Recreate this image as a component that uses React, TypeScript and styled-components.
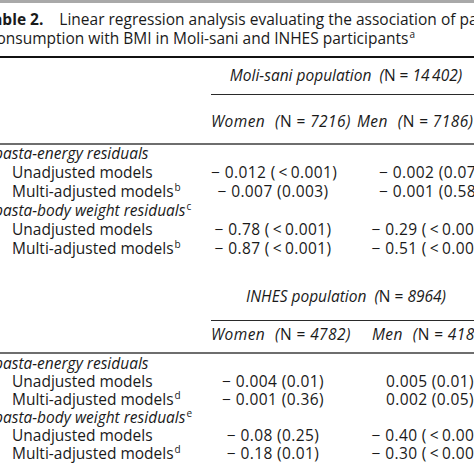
import React from "react";
import styled, { createGlobalStyle } from "styled-components";

const GlobalStyle = createGlobalStyle`
  html, body {
    margin: 0;
    padding: 0;
    background: #ffffff;
    overflow: hidden;
  }
  body {
    width: 474px;
    height: 474px;
    font-family: "Open Sans", "Noto Sans", sans-serif;
    color: #1a1a1a;
  }
`;

const Page = styled.div`
  width: 474px;
  height: 474px;
  overflow: hidden;
  font-size: 15.5px;
`;

const TopBand = styled.div`
  height: 3px;
  background: #a9a9a9;
`;

const Inner = styled.div`
  margin-left: -6px;
  width: 509px;
`;

const Caption = styled.div`
  margin-top: 7px;
  font-size: 15.5px;
  line-height: 19px;
  white-space: nowrap;
`;

const CaptionLine = styled.div<{ $indent: number }>`
  margin-left: ${(p) => p.$indent}px;
`;

const CaptionLabel = styled.b`
  font-weight: 700;
  margin-right: 16px;
`;

const ThickRule = styled.div`
  margin-top: 8px;
  height: 2px;
  background: #111111;
`;

const Row = styled.div<{ $top?: number; $lh?: number }>`
  display: grid;
  grid-template-columns: 217px 124px 168px;
  margin-top: ${(p) => p.$top ?? 0}px;
  line-height: ${(p) => p.$lh ?? 18}px;
  white-space: nowrap;
`;

const PopHeader = styled.div`
  grid-column: 2 / 4;
  text-align: center;
  padding-right: 22px;
  font-style: italic;
`;

const SubRule = styled.div<{ $top: number }>`
  margin: ${(p) => p.$top}px 0 0 217px;
  height: 1px;
  background: #2a2a2a;
`;

const SexHeader = styled.div<{ $indent?: number }>`
  font-style: italic;
  letter-spacing: 0.4px;
  padding-left: ${(p) => p.$indent ?? 0}px;
`;

const FullRule = styled.div<{ $top: number }>`
  margin-top: ${(p) => p.$top}px;
  height: 2px;
  background: #6e6e6e;
`;

const GroupLabel = styled.div`
  font-style: italic;
`;

const ModelLabel = styled.div`
  padding-left: 18px;
`;

const Value = styled.div<{ $men?: boolean }>`
  text-align: center;
  padding-left: ${(p) => (p.$men ? 22 : 0)}px;
  letter-spacing: 0.4px;
`;

const Sup = styled.sup`
  font-style: normal;
  font-size: 10px;
  line-height: 0;
  vertical-align: 6px;
  margin-left: 1px;
  letter-spacing: 0;
`;

const Paren = styled.span<{ $gap?: number }>`
  margin-left: ${(p) => p.$gap ?? 10}px;
`;

const Upright = styled.span`
  font-style: normal;
`;

const NLabel = ({ n, gap }: { n: string; gap?: number }) => (
  <Paren $gap={gap}>
    {"("}
    <Upright>N{" = "}</Upright>
    {n})
  </Paren>
);

type ModelRow = { label: string; sup?: string; women: string; men: string };
type Group = { title: string; sup?: string; rows: ModelRow[] };

type Population = {
  name: string;
  total: string;
  women: string;
  men: string;
  menIndent: number;
  groups: Group[];
  headerTop: number;
  subRuleTop: number;
  sexTop: number;
  ruleTop: number;
  rowTop: number;
  lh: number;
};

const m = "\u2212 ";
const lt = "(\u2009<\u20090.001)";

const populations: Population[] = [
  {
    name: "Moli-sani population",
    total: "14\u2009402",
    women: "7216",
    men: "7186",
    menIndent: 22,
    headerTop: 8,
    subRuleTop: 10,
    sexTop: 17,
    ruleTop: 13,
    rowTop: -1,
    lh: 19,
    groups: [
      {
        title: "pasta-energy residuals",
        rows: [
          { label: "Unadjusted models", women: `${m}0.012 ${lt}`, men: `${m}0.002 (0.07)` },
          { label: "Multi-adjusted models", sup: "b", women: `${m}0.007 (0.003)`, men: `${m}0.001 (0.58)` },
        ],
      },
      {
        title: "pasta-body weight residuals",
        sup: "c",
        rows: [
          { label: "Unadjusted models", women: `${m}0.78 ${lt}`, men: `${m}0.29 ${lt}` },
          { label: "Multi-adjusted models", sup: "b", women: `${m}0.87 ${lt}`, men: `${m}0.51 ${lt}` },
        ],
      },
    ],
  },
  {
    name: "INHES population",
    total: "8964",
    women: "4782",
    men: "4182",
    menIndent: 37,
    headerTop: 29,
    subRuleTop: 15,
    sexTop: 4,
    ruleTop: 9,
    rowTop: 0,
    lh: 18,
    groups: [
      {
        title: "pasta-energy residuals",
        rows: [
          { label: "Unadjusted models", women: `${m}0.004 (0.01)`, men: "0.005 (0.01)" },
          { label: "Multi-adjusted models", sup: "d", women: `${m}0.001 (0.36)`, men: "0.002 (0.05)" },
        ],
      },
      {
        title: "pasta-body weight residuals",
        sup: "e",
        rows: [
          { label: "Unadjusted models", women: `${m}0.08 (0.25)`, men: `${m}0.40 ${lt}` },
          { label: "Multi-adjusted models", sup: "d", women: `${m}0.18 (0.01)`, men: `${m}0.30 ${lt}` },
        ],
      },
    ],
  },
];

const PopulationBlock = ({ p }: { p: Population }) => (
  <>
    <Row $top={p.headerTop}>
      <PopHeader>
        {p.name}
        <NLabel n={p.total} gap={8} />
      </PopHeader>
    </Row>
    <SubRule $top={p.subRuleTop} />
    <Row $top={p.sexTop}>
      <div />
      <SexHeader>
        Women
        <NLabel n={p.women} />
      </SexHeader>
      <SexHeader $indent={p.menIndent}>
        Men
        <NLabel n={p.men} />
      </SexHeader>
    </Row>
    <FullRule $top={p.ruleTop} />
    <div style={{ marginTop: p.rowTop }}>
      {p.groups.map((g) => (
        <React.Fragment key={g.title}>
          <Row $lh={p.lh}>
            <GroupLabel>
              {g.title}
              {g.sup && <Sup>{g.sup}</Sup>}
            </GroupLabel>
          </Row>
          {g.rows.map((r) => (
            <Row $lh={p.lh} key={r.label + r.women}>
              <ModelLabel>
                {r.label}
                {r.sup && <Sup>{r.sup}</Sup>}
              </ModelLabel>
              <Value>{r.women}</Value>
              <Value $men>{r.men}</Value>
            </Row>
          ))}
        </React.Fragment>
      ))}
    </div>
  </>
);

export default function App() {
  return (
    <Page>
      <GlobalStyle />
      <TopBand />
      <Inner>
        <Caption>
          <CaptionLine $indent={-10}>
            <CaptionLabel>Table 2.</CaptionLabel>
            Linear regression analysis evaluating the association of pasta
          </CaptionLine>
          <CaptionLine $indent={-5}>
            consumption with BMI in Moli-sani and INHES participants
            <Sup>a</Sup>
          </CaptionLine>
        </Caption>
        <ThickRule />
        {populations.map((p) => (
          <PopulationBlock key={p.name} p={p} />
        ))}
      </Inner>
    </Page>
  );
}
